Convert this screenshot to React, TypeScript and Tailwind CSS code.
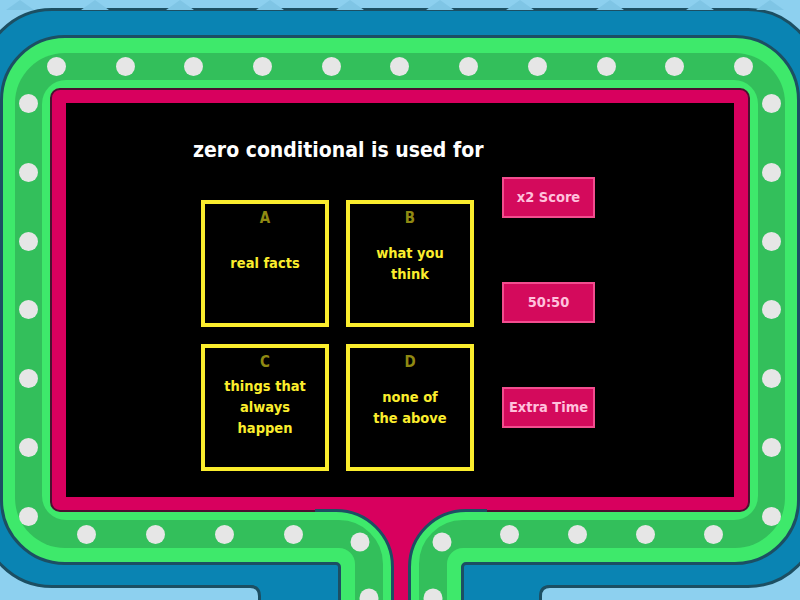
import React from 'react';

const answers = [
  { letter: 'A', lines: ['real facts'] },
  { letter: 'B', lines: ['what you', 'think'] },
  { letter: 'C', lines: ['things that', 'always', 'happen'] },
  { letter: 'D', lines: ['none of', 'the above'] },
];

const powerUps = ['x2 Score', '50:50', 'Extra Time'];

const Dot = () => <span className="block h-[19px] w-[19px] shrink-0 rounded-full bg-[#e6e6e6]" />;

const dots = (n: number) => Array.from({ length: n }, (_, i) => <Dot key={i} />);

// sky strip at the very top, a few soft peaks
const Sky = () => (
  <svg className="absolute left-0 top-0" width="800" height="10" viewBox="0 0 800 10">
    {[20, 95, 180, 270, 350, 440, 520, 610, 700, 770].map((x) => (
      <polygon key={x} points={`${x - 14},10 ${x},0 ${x + 14},10`} fill="#7fc5e5" />
    ))}
  </svg>
);

// the stand below the screen: pink stem between two green bands
const Stem = () => (
  <svg className="absolute left-[240px] top-[495px]" width="320" height="105" viewBox="240 495 320 105">
    <path
      d="M240 565 H560 V585 H550 Q540.5 585 540.5 595 V610 H259.5 V595 Q259.5 585 250 585 H240 Z"
      fill="#0a84b3"
    />
    <path
      d="M240 586.5 H250 Q259.5 586.5 259.5 596 V610 M540.5 610 V596 Q540.5 586.5 550 586.5 H560"
      fill="none"
      stroke="#1c4f63"
      strokeWidth="3"
    />
    <rect x="344" y="500" width="114" height="110" fill="#d8005e" />
    <g fill="none">
      <path d="M315 537 H336 A30 30 0 0 1 366 567 V610" stroke="#1c4f63" strokeWidth="56" />
      <path d="M436 610 V567 A30 30 0 0 1 466 537 H487" stroke="#1c4f63" strokeWidth="56" />
      <path d="M315 537 H336 A30 30 0 0 1 366 567 V610" stroke="#3ee96b" strokeWidth="50" />
      <path d="M436 610 V567 A30 30 0 0 1 466 537 H487" stroke="#3ee96b" strokeWidth="50" />
      <path d="M315 534 H339 A30 30 0 0 1 369 564 V610" stroke="#33bf5b" strokeWidth="28" />
      <path d="M433 610 V564 A30 30 0 0 1 463 534 H487" stroke="#33bf5b" strokeWidth="28" />
    </g>
    <g fill="#e6e6e6">
      <circle cx="360" cy="542" r="9.5" />
      <circle cx="442" cy="542" r="9.5" />
      <circle cx="369" cy="598" r="9.5" />
      <circle cx="433" cy="598" r="9.5" />
    </g>
  </svg>
);

const AnswerBox = ({ letter, lines }: { letter: string; lines: string[] }) => (
  <div className="flex flex-col border-4 border-[#fbed2d] text-center">
    <span className="mt-[4px] h-[20px] text-[15px] font-bold leading-[20px] text-[#8f8912]">{letter}</span>
    <div className="flex flex-1 flex-col justify-center text-[14.5px] font-bold leading-[21px] text-[#fbed2d]">
      {lines.map((l) => (
        <div key={l}>{l}</div>
      ))}
    </div>
    <span className="h-[24px]" />
  </div>
);

export default function App() {
  return (
    <div className="relative h-[600px] w-[800px] overflow-hidden bg-[#8dd0ef] font-['DejaVu_Sans_Condensed','DejaVu_Sans',sans-serif]">
      <Sky />
      <div className="mx-[-20px] mt-[8px] h-[580px] rounded-[72px] border-[3px] border-[#1c4f63] bg-[#0a84b3] px-[17px] pb-[20px] pt-[24px]">
        <div className="h-full rounded-[65px] border-[3px] border-[#1c4f63] bg-[#3ee96b] px-[12px] pb-[14px] pt-[15px]">
          <div className="flex h-full flex-col rounded-[50px] bg-[#33bf5b]">
            <div className="flex h-[27px] items-center justify-between px-[32px]">{dots(11)}</div>

            <div className="flex flex-1">
              <div className="-mb-[6px] mt-[14px] flex w-[27px] flex-col items-center justify-between">{dots(7)}</div>

              <div className="flex-1 rounded-[24px] bg-[#3ee96b] p-[8px]">
                <div className="h-full rounded-[10px] border-2 border-[#4b1030] bg-[#d8005e] px-[14px] py-[13px]">
                  <div className="h-full bg-black pt-[33px]">
                    <h1 className="pl-[127px] text-[21px] font-bold leading-[28px] text-white">
                      zero conditional is used for
                    </h1>
                    <div className="mt-[13px] flex items-start pl-[135px]">
                      <div className="mt-[23px] grid grid-cols-[128px_128px] grid-rows-[127px_127px] gap-[17px]">
                        {answers.map((a) => (
                          <AnswerBox key={a.letter} letter={a.letter} lines={a.lines} />
                        ))}
                      </div>
                      <div className="ml-[28px] flex flex-col gap-[64px]">
                        {powerUps.map((p) => (
                          <button
                            key={p}
                            className="flex h-[41px] w-[93px] items-center justify-center border-2 border-[#f24d8f] bg-[#d40a5c] text-[14.5px] font-bold text-[#ffc1dc]"
                          >
                            {p}
                          </button>
                        ))}
                      </div>
                    </div>
                  </div>
                </div>
              </div>

              <div className="-mb-[6px] mt-[14px] flex w-[27px] flex-col items-center justify-between">{dots(7)}</div>
            </div>

            <div className="flex h-[28px] items-center justify-between px-[62px]">
              <div className="flex gap-[50px]">{dots(4)}</div>
              <div className="flex gap-[49px]">{dots(4)}</div>
            </div>
          </div>
        </div>
      </div>
      <Stem />
    </div>
  );
}
